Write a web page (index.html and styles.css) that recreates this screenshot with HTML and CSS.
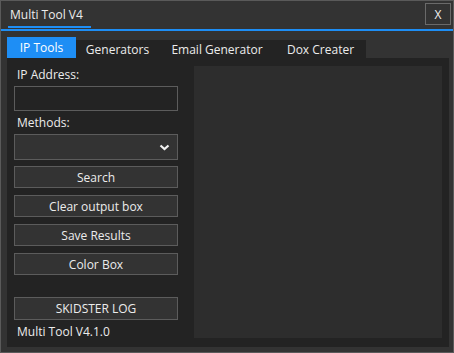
FILE: index.html
```html
<!DOCTYPE html>
<html lang="en">
<head>
<meta charset="utf-8">
<title>Multi Tool V4</title>
<link rel="stylesheet" href="styles.css">
</head>
<body>

<div class="window">
  <!-- Title bar -->
  <div class="titlebar">
    <div class="app-title">Multi Tool V4</div>
    <button class="close-btn">X</button>
  </div>
  <div class="accent"></div>

  <!-- Tabs -->
  <div class="tabs">
    <div class="tab active">IP Tools</div>
    <div class="tab-strip">
      <div class="tab gen">Generators</div>
      <div class="tab email">Email Generator</div>
      <div class="tab dox">Dox Creater</div>
    </div>
  </div>

  <!-- Panel -->
  <div class="panel">
    <div class="controls">
      <label class="field-label">IP Address:</label>
      <input class="field" type="text">
      <label class="field-label methods">Methods:</label>
      <div class="select">
        <svg width="11" height="7" viewBox="0 0 11 7"><path d="M1.5 1.5 L5.5 5 L9.5 1.5" fill="none" stroke="#f2f2f2" stroke-width="2.2"/></svg>
      </div>
      <button class="btn first">Search</button>
      <button class="btn">Clear output box</button>
      <button class="btn">Save Results</button>
      <button class="btn">Color Box</button>
      <button class="btn log">SKIDSTER LOG</button>
      <div class="version">Multi Tool V4.1.0</div>
    </div>
    <div class="output"></div>
  </div>
</div>

</body>
</html>
```

FILE: styles.css
```css
/* ======== Reset ======== */
* {
  box-sizing: border-box;
  margin: 0;
  padding: 0;
}

body {
  background: #333;
  color: #ececec;
  font-family: "Open Sans", "Noto Sans", sans-serif;
  font-size: 12px;
}

/* ======== Window ======== */
.window {
  display: flex;
  flex-direction: column;
  width: 454px;
  height: 353px;
  background: #333;
  border: 1px solid #5a5a5a;
  padding-bottom: 5px;
}

.titlebar {
  display: flex;
  flex-shrink: 0;
  justify-content: space-between;
  align-items: flex-start;
  height: 28px;
}

.app-title {
  margin-left: 7px;
  padding: 4px 2px 0;
  width: 83px;
  height: 27px;
  line-height: 19px;
  border-bottom: 2px solid #1e8ef5;
}

.close-btn {
  width: 26px;
  height: 22px;
  margin: 2px 2px 0 0;
  background: #333;
  color: #f0f0f0;
  border: 1px solid #6a6a6a;
  font-family: inherit;
  font-size: 12px;
}

.accent {
  flex-shrink: 0;
  height: 2px;
  background: #1e8ef5;
}

/* ======== Tabs ======== */
.tabs {
  display: flex;
  flex-shrink: 0;
  align-items: flex-end;
  margin: 6px 0 0 6px;
  height: 21px;
}

.tab {
  height: 18px;
  line-height: 20px;
  text-align: center;
  white-space: nowrap;
}

.tab.active {
  width: 69px;
  height: 21px;
  line-height: 21px;
  background: #1e8ef5;
  color: #fff;
}

.tab.gen   { width: 83px; }
.tab.email { width: 116px; }
.tab.dox   { width: 91px; }

.tab-strip {
  display: flex;
  background: #232323;
}

/* ======== Panel ======== */
.panel {
  display: flex;
  flex: 1;
  min-height: 0;
  margin: 0 4px 0 6px;
  padding: 8px 7px 9px 7px;
  background: #232323;
  gap: 16px;
}

.controls {
  display: flex;
  flex-direction: column;
  width: 164px;
}

.controls > * { flex-shrink: 0; }

.field-label {
  padding-left: 3px;
  height: 18px;
  line-height: 18px;
}

.methods { margin-top: 3px; }

.field {
  margin-top: 2px;
  height: 25px;
  background: #232323;
  border: 1px solid #5c5c5c;
  color: #eee;
}

.select {
  display: flex;
  justify-content: flex-end;
  align-items: center;
  margin-top: 2px;
  height: 26px;
  padding-right: 7px;
  background: #333;
  border: 1px solid #5c5c5c;
}

.btn {
  height: 22px;
  margin-top: 7px;
  background: #333;
  color: #ececec;
  border: 1px solid #5c5c5c;
  font-family: inherit;
  font-size: 12px;
}

.btn.first { margin-top: 6px; }

.btn.log {
  margin-top: 22px;
  height: 23px;
}

.version {
  padding-left: 3px;
  margin-top: 3px;
  height: 18px;
  line-height: 18px;
}

.output {
  flex: 1;
  background: #2d2d2d;
}
```
